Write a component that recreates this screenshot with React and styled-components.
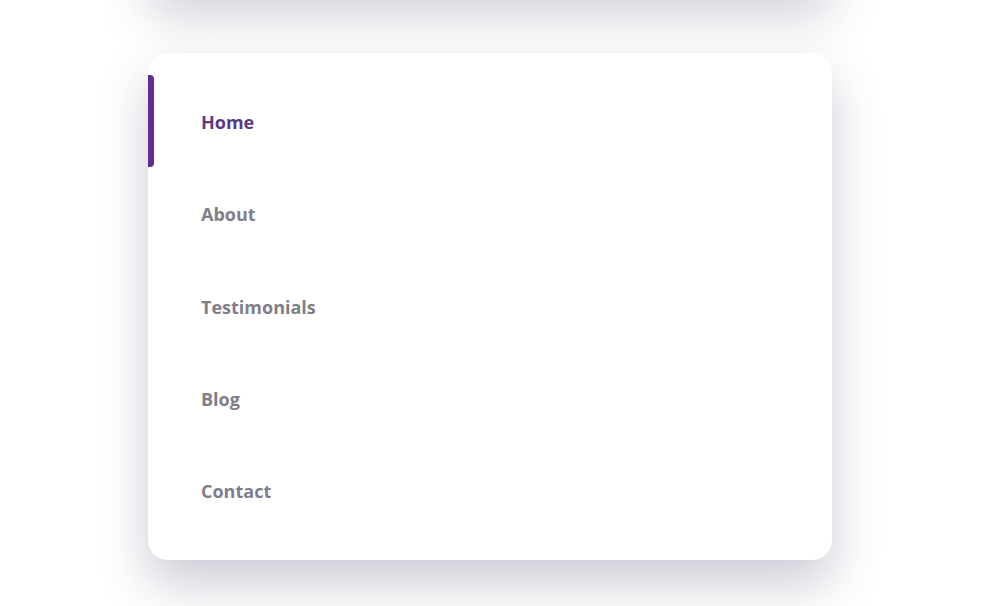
import React, { useState } from "react";
import styled, { createGlobalStyle } from "styled-components";

const Global = createGlobalStyle`
  html, body { margin: 0; padding: 0; background: #ffffff; }
  body { font-family: "Open Sans", "Liberation Sans", sans-serif; overflow: hidden; }
`;

const Page = styled.div`
  width: 996px;
  height: 606px;
  overflow: hidden;
  background: #ffffff;
`;

const Stack = styled.div`
  display: flex;
  flex-direction: column;
  align-items: center;
  gap: 63px;
  margin-top: -60px;
  padding-right: 16px;
`;

const Card = styled.nav`
  width: 684px;
  height: ${(p) => p.$height}px;
  box-sizing: border-box;
  background: #ffffff;
  border-radius: 20px;
  box-shadow: 0 24px 48px rgba(55, 55, 95, 0.25);
  padding: 23px 0 23px;
  display: flex;
  flex-direction: column;
`;

const Item = styled.a`
  position: relative;
  flex: 1;
  display: flex;
  align-items: center;
  padding-left: 53px;
  font-size: 18px;
  font-weight: 700;
  text-decoration: none;
  cursor: pointer;
  color: ${(p) => (p.$active ? "#5b3a87" : "#807e88")};

  &::before {
    content: "";
    position: absolute;
    left: 0;
    top: -1px;
    bottom: 1px;
    width: 6px;
    border-radius: 0 4px 4px 0;
    background: #5f2e95;
    opacity: ${(p) => (p.$active ? 1 : 0)};
  }
`;

const items = ["Home", "About", "Testimonials", "Blog", "Contact"];

export default function App() {
  const [active, setActive] = useState(0);
  return (
    <Page>
      <Global />
      <Stack>
        <Card $height={50} />
        <Card $height={507}>
          {items.map((label, i) => (
            <Item key={label} $active={i === active} onClick={() => setActive(i)}>
              {label}
            </Item>
          ))}
        </Card>
      </Stack>
    </Page>
  );
}
